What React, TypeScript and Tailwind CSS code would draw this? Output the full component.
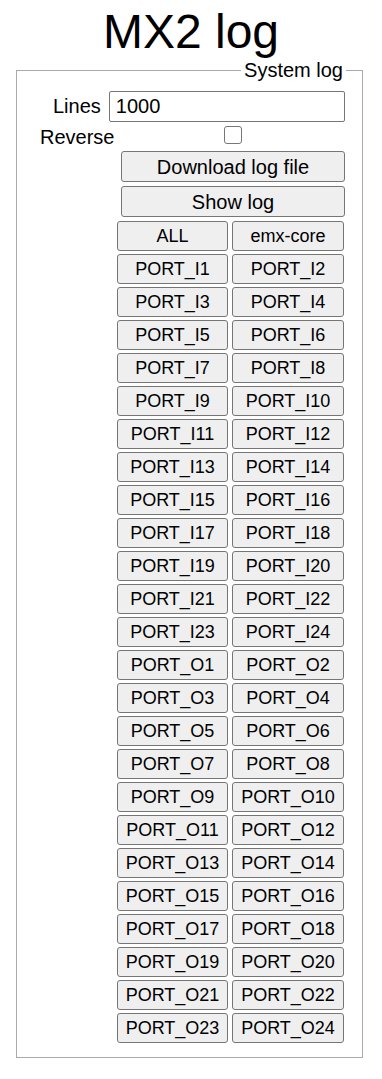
import { useState } from "react";

const ports: string[] = ["ALL", "emx-core"];
for (let i = 1; i <= 24; i++) ports.push(`PORT_I${i}`);
for (let i = 1; i <= 24; i++) ports.push(`PORT_O${i}`);

export default function App() {
  const [lines, setLines] = useState("1000");
  const [reverse, setReverse] = useState(false);
  const [active, setActive] = useState("ALL");

  return (
    <div className="w-[382px] pt-[4px] bg-white text-black font-['Liberation_Sans',Arial,sans-serif]">
      <h1 className="text-center text-[48px] leading-[55px] font-normal">MX2 log</h1>

      <fieldset className="ml-[16px] w-[347px] border border-[#aaaaaa] pl-0 pr-[16px] pt-[9px] pb-[14px]">
        <legend className="ml-auto px-[3px] text-[20px] leading-[23px]">System log</legend>

        {/* lines */}
        <div className="flex items-center h-[31px] pl-[36px]">
          <label className="text-[20px] leading-[23px]">Lines</label>
          <input
            value={lines}
            onChange={(e) => setLines(e.target.value)}
            className="ml-[8px] w-[236px] h-[31px] border border-[#767676] rounded-[2px] pl-[6px] text-[20px] outline-none"
          />
        </div>

        {/* reverse */}
        <div className="flex items-center h-[26px] pl-[23px]">
          <label className="mt-[4px] text-[20px] leading-[23px]">Reverse</label>
          <input
            type="checkbox"
            checked={reverse}
            onChange={() => setReverse(!reverse)}
            className="ml-[110px] w-[18px] h-[18px] appearance-none border border-[#767676] rounded-[3px] bg-white checked:bg-[#0075ff]"
          />
        </div>

        <button className="block mt-[3px] ml-[104px] w-[224px] h-[31px] bg-[#efefef] border border-[#767676] rounded-[3px] text-[20px]">
          Download log file
        </button>
        <button className="block mt-[4px] ml-[104px] w-[224px] h-[31px] bg-[#efefef] border border-[#767676] rounded-[3px] text-[20px]">
          Show log
        </button>

        <div className="mt-[4px] ml-[100px] grid grid-cols-[111px_112px] gap-x-[4px] gap-y-[3px]">
          {ports.map((p) => (
            <button
              key={p}
              onClick={() => setActive(p)}
              className={
                "h-[30px] border border-[#767676] rounded-[3px] text-[18px] " +
                (active === p ? "bg-[#efefef]" : "bg-[#efefef]")
              }
            >
              {p}
            </button>
          ))}
        </div>
      </fieldset>
    </div>
  );
}
